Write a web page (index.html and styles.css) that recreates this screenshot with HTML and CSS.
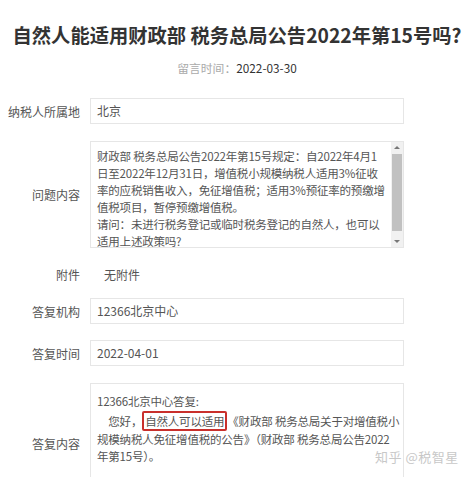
FILE: index.html
```html
<!DOCTYPE html>
<html lang="zh-CN">
<head>
<meta charset="UTF-8">
<meta name="viewport" content="width=device-width, initial-scale=1.0">
<title>留言详情</title>
<link rel="stylesheet" href="styles.css">
</head>
<body>

<div class="page">
<h1 class="title">自然人能适用财政部 税务总局公告2022年第15号吗?</h1>
<div class="date"><span class="date-label">留言时间：</span>2022-03-30</div>

<div class="row">
<div class="label">纳税人所属地</div>
<div class="field">北京</div>
</div>

<div class="row">
<div class="label">问题内容</div>
<div class="field area">
<div class="area-text">财政部 税务总局公告2022年第15号规定：自2022年4月1<br>日至2022年12月31日，增值税小规模纳税人适用3%征收<br>率的应税销售收入，免征增值税；适用3%预征率的预缴增<br>值税项目，暂停预缴增值税。<br>请问：未进行税务登记或临时税务登记的自然人，也可以<br>适用上述政策吗?</div>
<div class="scrollbar">
<div class="arrow up"></div>
<div class="thumb"></div>
<div class="arrow down"></div>
</div>
</div>
</div>

<div class="row plain">
<div class="label">附件</div>
<div class="none">无附件</div>
</div>

<div class="row">
<div class="label">答复机构</div>
<div class="field">12366北京中心</div>
</div>

<div class="row">
<div class="label">答复时间</div>
<div class="field">2022-04-01</div>
</div>

<div class="row">
<div class="label">答复内容</div>
<div class="field area answer">
<div class="area-text">12366北京中心答复:<br>&emsp;您好，<span class="mark">自然人可以适用</span>《财政部 税务总局关于对增值税小<br>规模纳税人免征增值税的公告》（财政部 税务总局公告2022<br>年第15号）。</div>
</div>
</div>

<div class="watermark">知乎 @税智星</div>
</div>

</body>
</html>
```

FILE: styles.css
```css
body {
margin: 0;
background-color: #fff;
font-family: "Noto Sans CJK SC", "Noto Sans", sans-serif;
color: #555;
}
.page {
position: relative;
width: 474px;
height: 477px;
overflow: hidden;
}
.title {
margin: 21px 0 0;
font-size: 19.3px;
line-height: 28px;
font-weight: bold;
color: #333;
text-align: center;
white-space: nowrap;
}
.date {
margin-top: 10px;
font-size: 11.8px;
line-height: 18px;
color: #333;
text-align: center;
margin-bottom: 21px;
}
.date-label {
color: #aaa;
}
.row {
display: flex;
align-items: center;
gap: 10px;
margin-bottom: 17px;
}
.label {
width: 80px;
text-align: right;
font-size: 12px;
color: #555;
flex-shrink: 0;
}
.field {
box-sizing: border-box;
width: 314px;
height: 26px;
border: 1px solid #e6e6e6;
padding: 0 6px;
font-size: 12px;
line-height: 24px;
color: #555;
}
.area {
display: flex;
height: 107px;
padding: 0;
overflow: hidden;
}
.area-text {
flex: 1;
padding: 6px 0 0 6px;
line-height: 17px;
font-size: 11.5px;
letter-spacing: -0.2px;
white-space: nowrap;
}
.scrollbar {
width: 12px;
display: flex;
flex-direction: column;
background-color: #f1f1f1;
}
.arrow {
height: 11px;
position: relative;
}
.arrow::after {
content: "";
position: absolute;
left: 3px;
border-left: 3px solid transparent;
border-right: 3px solid transparent;
}
.arrow.up::after {
top: 4px;
border-bottom: 3px solid #777;
}
.arrow.down::after {
top: 4px;
border-top: 3px solid #777;
}
.thumb {
margin: 1px 1px 0;
height: 77px;
background-color: #c1c1c1;
}
.down {
margin-top: auto;
}
.plain {
height: 20px;
margin-top: -1px;
margin-bottom: 14px;
}
.none {
padding-left: 14px;
font-size: 12px;
color: #555;
}
.row:nth-of-type(5) {
margin-bottom: 16px;
}
.answer {
height: 120px;
display: block;
}
.answer .area-text {
padding-top: 9px;
}
.mark {
display: inline-block;
line-height: 16px;
border: 2px solid #c9302c;
border-radius: 2px;
padding: 0 1px;
margin: 1px 0 0;
}
.watermark {
position: absolute;
left: 375px;
top: 448px;
font-size: 13px;
line-height: 18px;
color: #c8c8c8;
letter-spacing: 0.5px;
}
```
